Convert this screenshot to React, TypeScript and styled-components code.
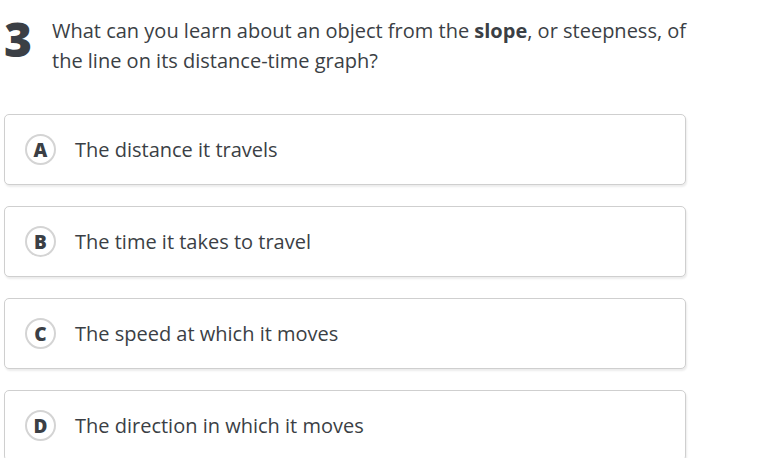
import React from "react";
import styled, { createGlobalStyle } from "styled-components";

const Global = createGlobalStyle`
  html, body { margin: 0; padding: 0; background: #fff; }
  body { font-family: "Open Sans", "Noto Sans", sans-serif; color: #3b3f45; }
`;

const Page = styled.div`
  padding: 16px 4px 0 4px;
  width: 682px;
`;

const Header = styled.div`
  display: flex;
  align-items: flex-start;
`;

const Number = styled.div`
  width: 48px;
  flex-shrink: 0;
  font-size: 48px;
  font-weight: 800;
  line-height: 46px;
  color: #3b3f45;
`;

const Question = styled.div`
  width: 665px;
  flex-shrink: 0;
  font-size: 20px;
  line-height: 30px;
  color: #3b3f45;
  b { font-weight: 700; }
`;

const Options = styled.div`
  display: flex;
  flex-direction: column;
  gap: 21px;
  margin-top: 38px;
`;

const Card = styled.div`
  display: flex;
  align-items: center;
  height: 71px;
  box-sizing: border-box;
  border: 1px solid #cfcfcf;
  border-radius: 5px;
  box-shadow: 1px 2px 2px rgba(0, 0, 0, 0.08);
  padding-left: 20px;
  background: #fff;
`;

const Badge = styled.div`
  width: 31px;
  height: 31px;
  box-sizing: border-box;
  border: 2px solid #d4d4d4;
  border-radius: 50%;
  display: flex;
  align-items: center;
  justify-content: center;
  font-size: 19px;
  font-weight: 800;
  color: #3b3f45;
  margin-right: 19px;
  flex-shrink: 0;
`;

const Label = styled.div`
  font-size: 20px;
  color: #3b3f45;
`;

const options = [
  ["A", "The distance it travels"],
  ["B", "The time it takes to travel"],
  ["C", "The speed at which it moves"],
  ["D", "The direction in which it moves"],
];

export default function App() {
  return (
    <>
      <Global />
      <Page>
        <Header>
          <Number>3</Number>
          <Question>
            What can you learn about an object from the <b>slope</b>, or steepness, of
            <br />
            the line on its distance-time graph?
          </Question>
        </Header>
        <Options>
          {options.map(([l, t]) => (
            <Card key={l}>
              <Badge>{l}</Badge>
              <Label>{t}</Label>
            </Card>
          ))}
        </Options>
      </Page>
    </>
  );
}
